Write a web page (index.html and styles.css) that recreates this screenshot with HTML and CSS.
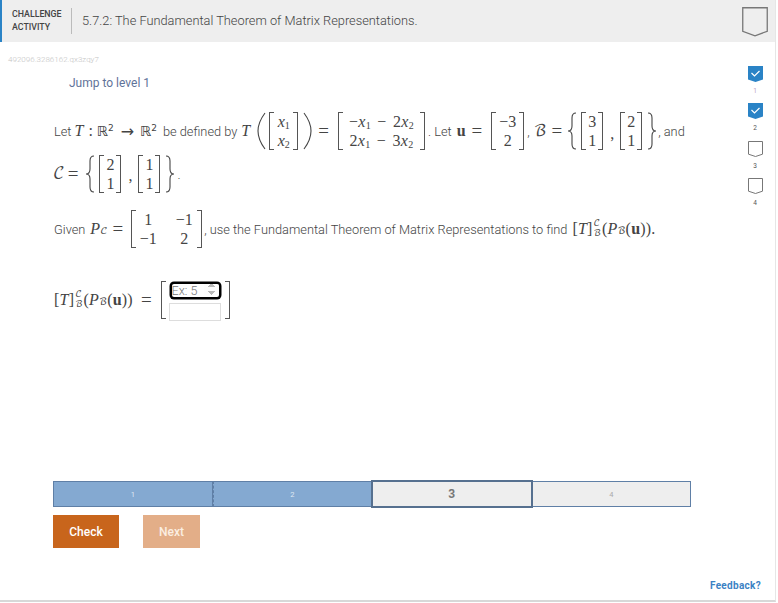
FILE: index.html
```html
<!DOCTYPE html>
<html lang="en">
<head>
<meta charset="utf-8">
<title>5.7.2: The Fundamental Theorem of Matrix Representations.</title>
<link rel="stylesheet" href="styles.css">
</head>
<body>
<div class="card">
  <header class="head">
    <div class="kind">CHALLENGE<br>ACTIVITY</div>
    <h1 class="title">5.7.2: The Fundamental Theorem of Matrix Representations.</h1>
    <svg class="shield" viewBox="0 0 26 30"><path d="M.75.75h24.5v23.5l-12.25 4.5-12.25-4.5z"/></svg>
  </header>
  <div class="body">
    <main class="main">
      <div class="seed">492096.3286162.qx3zqy7</div>
      <a class="jump">Jump to level 1</a>
      <div class="line l1">
        <span class="t">Let</span><i class="m g3">T</i><span class="m g5">:</span><span class="m g4 bb">ℝ<sup>2</sup></span><span class="m g7 arrow">→</span><span class="m g6 bb">ℝ<sup>2</sup></span><span class="t g6">be defined by</span><i class="m g4">T</i>
        <svg class="paren g7" viewBox="0 0 9 38"><path d="M8 1C2 9 1 14 1 19s1 10 7 18"/></svg>
        <span class="mat g3"><span class="lb"></span><span class="cells w19"><span><i>x</i><sub>1</sub></span><span><i>x</i><sub>2</sub></span></span><span class="rb"></span></span>
        <svg class="paren g5" viewBox="0 0 9 38"><path d="M1 1c6 8 7 13 7 18s-1 10-7 18"/></svg>
        <span class="m eq g6">=</span>
        <span class="mat g9"><span class="lb"></span><span class="cells w77"><span>−<i>x</i><sub>1</sub> − 2<i>x</i><sub>2</sub></span><span>2<i>x</i><sub>1</sub> − 3<i>x</i><sub>2</sub></span></span><span class="rb"></span></span>
        <span class="t g3">. Let</span><b class="m g5">u</b><span class="m eq g6">=</span>
        <span class="mat g9"><span class="lb"></span><span class="cells w23"><span>−3</span><span>2</span></span><span class="rb"></span></span>
        <span class="t g3">,</span><span class="m script g4">ℬ</span><span class="m eq g5">=</span>
        <svg class="brace g5" viewBox="0 0 10 38"><path d="M9 1C6 1 5 3 5 6v8c0 3-1 5-4 5 3 0 4 2 4 5v8c0 3 1 5 4 5"/></svg>
        <span class="mat g4"><span class="lb"></span><span class="cells w12"><span>3</span><span>1</span></span><span class="rb"></span></span>
        <span class="m g7 comma">,</span>
        <span class="mat g6"><span class="lb"></span><span class="cells w12"><span>2</span><span>1</span></span><span class="rb"></span></span>
        <svg class="brace g5" viewBox="0 0 10 38"><path d="M1 1c3 0 4 2 4 5v8c0 3 1 5 4 5-3 0-4 2-4 5v8c0 3-1 5-4 5"/></svg>
        <span class="t g1">, and</span>
      </div>
      <div class="line l2">
        <span class="m script back">𝒞</span><span class="m eq g3">=</span>
        <svg class="brace g7" viewBox="0 0 10 38"><path d="M9 1C6 1 5 3 5 6v8c0 3-1 5-4 5 3 0 4 2 4 5v8c0 3 1 5 4 5"/></svg>
        <span class="mat g4"><span class="lb"></span><span class="cells w12"><span>2</span><span>1</span></span><span class="rb"></span></span>
        <span class="m g7 comma">,</span>
        <span class="mat g6"><span class="lb"></span><span class="cells w12"><span>1</span><span>1</span></span><span class="rb"></span></span>
        <svg class="brace g5" viewBox="0 0 10 38"><path d="M1 1c3 0 4 2 4 5v8c0 3 1 5 4 5-3 0-4 2-4 5v8c0 3-1 5-4 5"/></svg>
        <span class="t g2">.</span>
      </div>
      <div class="line l3">
        <span class="t">Given</span><span class="m g5 pc"><i>P</i><sub class="script">𝒞</sub></span><span class="m eq g5">=</span>
        <span class="mat g8"><span class="lb"></span><span class="cells two"><span>1</span><span>−1</span><span>−1</span><span>2</span></span><span class="rb"></span></span>
        <span class="t g2">, use the Fundamental Theorem of Matrix Representations to find</span>
        <span class="m g5 expr">[<i>T</i>]<span class="stack"><span class="script">𝒞</span><span class="script">ℬ</span></span>(<i>P</i><sub class="script">ℬ</sub>(<b>u</b>)).</span>
      </div>
      <div class="line l4">
        <span class="m expr">[<i>T</i>]<span class="stack"><span class="script">𝒞</span><span class="script">ℬ</span></span>(<i>P</i><sub class="script">ℬ</sub>(<b>u</b>))</span><span class="m eq g8">=</span>
        <span class="mat g9"><span class="lb"></span><span class="inputs"><input class="num focus" type="number" placeholder="Ex: 5" aria-label="Row 1"><input class="num plain" type="number" aria-label="Row 2"></span><span class="rb"></span></span>
      </div>
      <div class="steps">
        <div class="step done">1</div>
        <div class="step done dash">2</div>
        <div class="step now">3</div>
        <div class="step todo">4</div>
      </div>
      <div class="actions">
        <button class="btn check" type="button">Check</button>
        <button class="btn next" type="button">Next</button>
      </div>
      <a class="feedback">Feedback?</a>
    </main>
    <aside class="rail">
      <div class="lvl"><svg viewBox="0 0 15 16"><path class="fill" d="M0 0h15v13.5L7.5 16 0 13.5z"/><path class="chk" d="M3.5 7l3 3 5-5"/></svg><span class="first">1</span></div>
      <div class="lvl"><svg viewBox="0 0 15 16"><path class="fill" d="M0 0h15v13.5L7.5 16 0 13.5z"/><path class="chk" d="M3.5 7l3 3 5-5"/></svg><span>2</span></div>
      <div class="lvl"><svg viewBox="0 0 15 16"><path class="open" d="M.5.5h14v12.7l-7 2.3-7-2.3z"/></svg><span>3</span></div>
      <div class="lvl"><svg viewBox="0 0 15 16"><path class="open" d="M.5.5h14v12.7l-7 2.3-7-2.3z"/></svg><span>4</span></div>
    </aside>
  </div>
</div>
</body>
</html>
```
FILE: styles.css
```css
* { box-sizing: border-box; }
html, body { margin: 0; background: #fff; }
body { font-family: Roboto, sans-serif; color: #555; width: 778px; height: 603px; overflow: hidden; }
.card { width: 776px; height: 602px; display: flex; flex-direction: column; border-right: 1px solid #e6e6e6; border-bottom: 2px solid #d8d8d8; }
.head { height: 42px; flex: none; display: flex; align-items: center; background: #eee; border-left: 2px solid #2a83c6; padding-left: 10px; }
.kind { font-size: 8.8px; line-height: 12.5px; font-weight: 500; color: #444; width: 60px; height: 26px; border-right: 1px solid #bbb; flex: none; }
.title { margin: 0 0 2px 10px; font-size: 12.8px; font-weight: 300; color: #444; flex: 1; }
.shield { width: 26px; height: 30px; flex: none; margin-right: 7px; margin-top: 1px; }
.shield path { fill: none; stroke: #777; stroke-width: 1.3; }
.body { flex: 1; display: flex; min-height: 0; }
.main { flex: 1; min-width: 0; padding-left: 53px; display: flex; flex-direction: column; }
.seed { font-size: 8px; font-weight: 300; color: #c4c4c4; margin: 13px 0 0 -45px; line-height: 9px; }
.jump { font-size: 12px; color: #5f7399; margin: 12px 0 0 16px; line-height: 14px; }
.line { display: flex; align-items: center; white-space: nowrap; margin-left: 1px; }
.l1 { height: 40px; margin-top: 21px; }
.l2 { height: 38px; margin-top: 4px; }
.l3 { height: 42px; margin-top: 15px; }
.l4 { height: 40px; margin-top: 30px; }
.t { font-size: 12.8px; font-weight: 300; color: #444; }
.m { font-family: "Liberation Serif", serif; color: #444; font-size: 16px; }
.eq { font-size: 19px; line-height: 16px; }
.m sup { font-size: 9px; line-height: 0; vertical-align: 5px; }
.m sub, .cells sub { font-size: 10px; line-height: 0; vertical-align: -2px; }
.script { font-family: "DejaVu Math TeX Gyre", "DejaVu Sans", serif; font-style: normal; }
.bb { font-family: "DejaVu Sans", sans-serif; font-size: 14px; }
.arrow { font-family: "DejaVu Sans", sans-serif; }
.back { margin-left: -1px; }
.g1 { margin-left: 1px; } .g2 { margin-left: 2px; } .g3 { margin-left: 3px; } .g4 { margin-left: 4px; } .g5 { margin-left: 5px; } .g6 { margin-left: 6px; } .g7 { margin-left: 7px; } .g8 { margin-left: 8px; } .g9 { margin-left: 9px; }
.paren { width: 9px; height: 38px; flex: none; }
.brace { width: 10px; height: 38px; flex: none; }
.paren path, .brace path { fill: none; stroke: #444; stroke-width: 1.1; }
.mat { display: inline-flex; align-items: stretch; height: 38px; flex: none; font-family: "Liberation Serif", serif; font-size: 16px; color: #444; }
.lb, .rb { width: 5px; flex: none; border: 1px solid #555; }
.lb { border-right: 0; }
.rb { border-left: 0; }
.cells { display: grid; align-content: space-around; justify-items: center; line-height: 16px; }
.w12 { width: 12px; } .w19 { width: 19px; } .w23 { width: 23px; }
.w77 { width: 77px; word-spacing: 2px; letter-spacing: .3px; }
.two { width: 61px; grid-template-columns: 24px 24px; column-gap: 12px; }
.comma { align-self: flex-end; margin-bottom: 8px; }
.expr { display: inline-flex; align-items: center; letter-spacing: .2px; }
.expr sub { font-size: 10px; align-self: flex-end; vertical-align: baseline; line-height: 14px; margin-bottom: 1px; }
.stack { display: inline-flex; flex-direction: column; font-size: 9px; line-height: 10px; margin: 0 1px; }
.pc { display: inline-flex; align-items: baseline; }
.inputs { width: 59px; display: flex; flex-direction: column; align-items: center; padding-top: 3px; }
.num { font: 300 12.5px Roboto, sans-serif; padding: 0; background: #fff; color: #444; }
.num::placeholder { color: #777; }
.focus { width: 47px; height: 13px; border: 0; outline: 0; box-shadow: 0 0 0 2.5px #000; border-radius: 2px; }
.focus::-webkit-inner-spin-button { opacity: .6; width: 7px; height: 12px; }
.plain { width: 52px; height: 18px; margin-top: 6px; flex: none; border: 1px solid #ddd; }
.plain::-webkit-inner-spin-button { display: none; }
.steps { display: flex; width: 638px; height: 26px; margin-top: 161px; }
.step { flex: 1; display: flex; align-items: center; justify-content: center; font-size: 7.5px; border: 1px solid #5f7fa6; border-left-width: 0; }
.step:first-child { border-left-width: 1px; }
.done { background: #84a9d1; color: #dfe8f2; }
.dash { border-left: 1px dashed #5f7fa6; border-right: 0; }
.now { background: #eee; border: 2px solid #56708f; font-size: 12px; font-weight: 700; color: #777; margin: -1px 0; }
.todo { background: #eee; color: #aaa; border-left: 0; }
.actions { display: flex; gap: 24px; margin-top: 8px; }
.btn { height: 33px; border: 0; padding: 0; font: 500 12px Roboto, sans-serif; color: #fff; }
.check { width: 66px; background: #c8651c; }
.next { width: 57px; background: #e3ae88; color: #fbeee2; }
.feedback { align-self: flex-end; margin: 32px -8px 0 0; font-size: 10px; font-weight: 700; color: #3b82c4; letter-spacing: .3px; line-height: 12px; }
.rail { width: 42px; flex: none; padding-top: 24px; display: flex; flex-direction: column; align-items: center; gap: 7px; margin-left: -20px; }
.lvl { display: flex; flex-direction: column; align-items: center; height: 30.4px; margin-left: 2px; }
.lvl svg { width: 15px; height: 16px; flex: none; }
.lvl span { font-size: 6.5px; line-height: 18px; color: #555; }
.lvl .first { color: #b99bc4; }
.fill { fill: #2a83c6; }
.chk { fill: none; stroke: #fff; stroke-width: 1.2; }
.open { fill: #fff; stroke: #777; stroke-width: 1; }
```
